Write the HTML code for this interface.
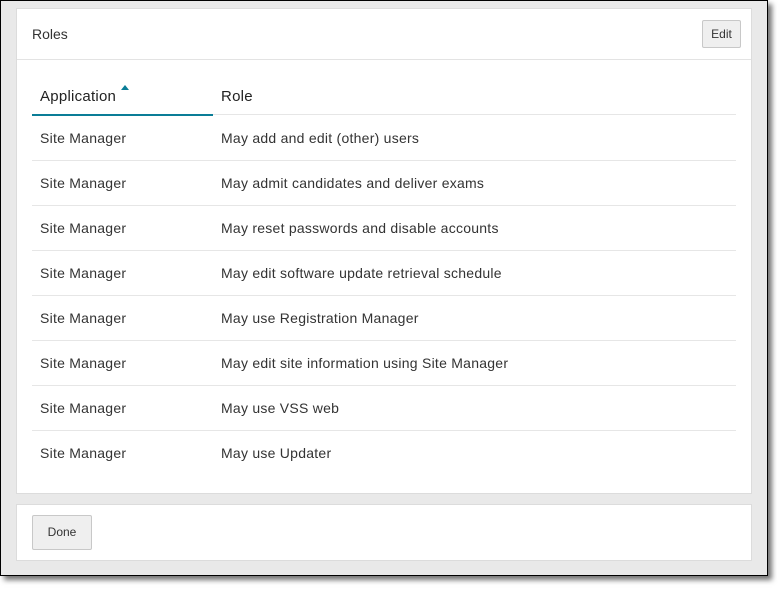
<!DOCTYPE html><html><head><style>
body{margin:0;width:783px;height:590px;background:#fff;font-family:"Liberation Sans",sans-serif;position:relative;overflow:hidden}
.frame{position:absolute;left:0;top:0;width:766px;height:574px;border:1px solid #000;background:#e9e9e9;box-shadow:4px 4px 5px rgba(0,0,0,.55)}
.p{position:absolute;background:#fff;border:1px solid #dcdcdc;box-sizing:border-box}
.btn{position:absolute;background:#efefef;border:1px solid #c8c8c8;border-radius:2px;box-sizing:border-box;font-size:12px;color:#333;text-align:center}
.t{position:absolute;font-size:14px;color:#333;letter-spacing:0.25px}
.l{position:absolute;left:32px;width:704px;height:1px;background:#e6e6e6}
</style></head><body>
<div class="frame"></div>
<div class="p" style="left:16px;top:8px;width:736px;height:486px"></div>
<div style="position:absolute;left:17px;top:59px;width:734px;height:1px;background:#e3e3e3"></div>
<div class="t" style="left:32px;top:26px;letter-spacing:0">Roles</div>
<div class="btn" style="left:702px;top:20px;width:39px;height:28px;line-height:26px">Edit</div>
<div class="t" style="left:40px;top:88px;font-size:15px;color:#222">Application</div>
<div style="position:absolute;left:121px;top:85px;width:0;height:0;border-left:4px solid transparent;border-right:4px solid transparent;border-bottom:5px solid #0a7d97"></div>
<div class="t" style="left:221px;top:88px;font-size:15px;color:#222">Role</div>
<div class="l" style="top:114px"></div>
<div style="position:absolute;left:32px;top:114px;width:181px;height:2px;background:#0a7d97"></div>
<div class="t" style="left:40px;top:130px">Site Manager</div><div class="t" style="left:221px;top:130px">May add and edit (other) users</div>
<div class="l" style="top:160px"></div>
<div class="t" style="left:40px;top:175px">Site Manager</div><div class="t" style="left:221px;top:175px">May admit candidates and deliver exams</div>
<div class="l" style="top:205px"></div>
<div class="t" style="left:40px;top:220px">Site Manager</div><div class="t" style="left:221px;top:220px">May reset passwords and disable accounts</div>
<div class="l" style="top:250px"></div>
<div class="t" style="left:40px;top:265px">Site Manager</div><div class="t" style="left:221px;top:265px">May edit software update retrieval schedule</div>
<div class="l" style="top:295px"></div>
<div class="t" style="left:40px;top:310px">Site Manager</div><div class="t" style="left:221px;top:310px">May use Registration Manager</div>
<div class="l" style="top:340px"></div>
<div class="t" style="left:40px;top:355px">Site Manager</div><div class="t" style="left:221px;top:355px">May edit site information using Site Manager</div>
<div class="l" style="top:385px"></div>
<div class="t" style="left:40px;top:400px">Site Manager</div><div class="t" style="left:221px;top:400px">May use VSS web</div>
<div class="l" style="top:430px"></div>
<div class="t" style="left:40px;top:445px">Site Manager</div><div class="t" style="left:221px;top:445px">May use Updater</div>
<div class="p" style="left:16px;top:504px;width:736px;height:57px"></div>
<div class="btn" style="left:32px;top:515px;width:60px;height:35px;line-height:33px">Done</div>
</body></html>
